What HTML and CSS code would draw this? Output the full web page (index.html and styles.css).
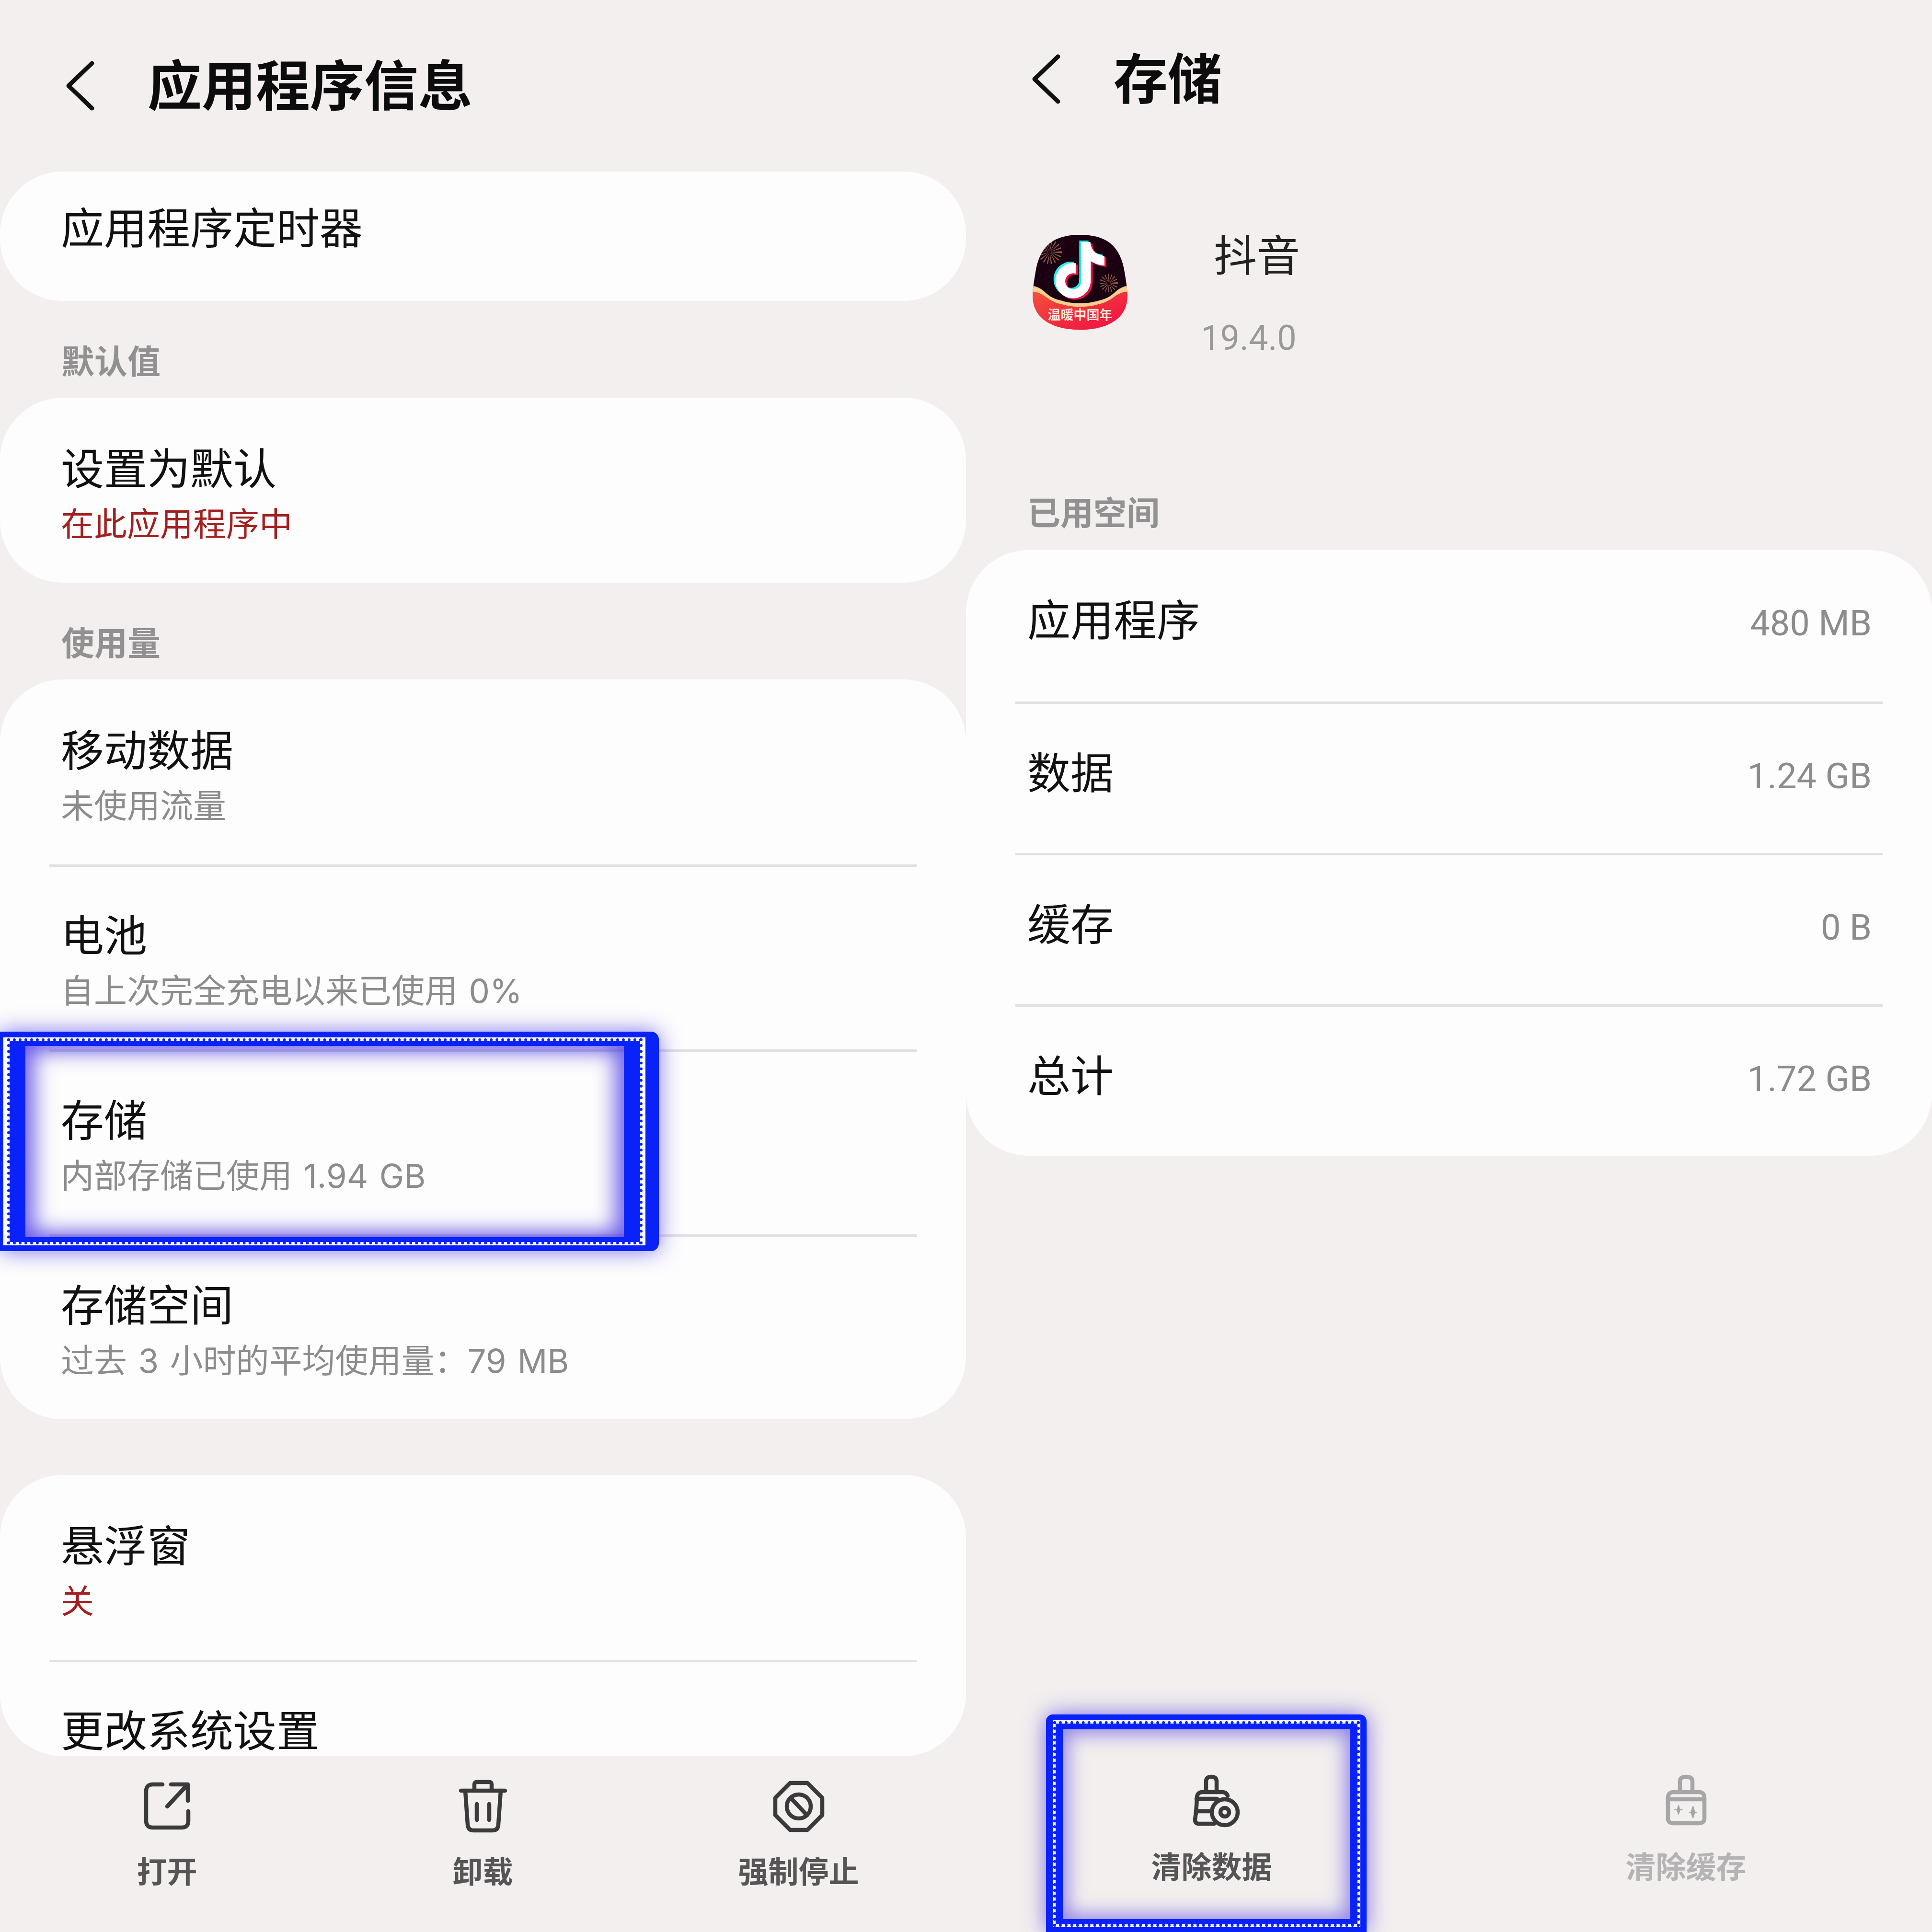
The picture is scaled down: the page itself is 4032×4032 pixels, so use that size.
FILE: index.html
```html
<!DOCTYPE html>
<html lang="zh-CN">
<head>
<meta charset="utf-8">
<title>应用程序信息</title>
<link rel="stylesheet" href="styles.css">
</head>
<body>
<svg class="defs" width="0" height="0" aria-hidden="true">
  <defs>
    <path id="note" d="M12.53.02C13.84 0 15.14.01 16.44 0c.08 1.53.63 3.09 1.75 4.17 1.12 1.11 2.7 1.62 4.24 1.79v4.03c-1.44-.05-2.89-.35-4.2-.97-.57-.26-1.1-.59-1.62-.93-.01 2.92.01 5.84-.02 8.75-.08 1.4-.54 2.79-1.35 3.94-1.31 1.92-3.58 3.17-5.91 3.21-1.43.08-2.86-.31-4.08-1.03-2.02-1.19-3.44-3.37-3.65-5.71-.02-.5-.03-1-.01-1.49.18-1.9 1.12-3.72 2.58-4.96 1.66-1.44 3.98-2.13 6.15-1.72.02 1.48-.04 2.96-.04 4.44-.99-.32-2.15-.23-3.02.37-.63.41-1.11 1.04-1.36 1.75-.21.51-.15 1.07-.14 1.61.24 1.64 1.82 3.02 3.5 2.87 1.12-.01 2.19-.66 2.77-1.61.19-.33.4-.67.41-1.06.1-1.79.06-3.57.07-5.36.01-4.03-.01-8.05.02-12.07z"/>
    <clipPath id="squircle">
      <path d="M100 2C160 2 185 30 193 80C198 110 200 125 198 140C194 175 160 200 100 200C40 200 6 175 2 140C0 125 2 110 7 80C15 30 40 2 100 2Z"/>
    </clipPath>
    <linearGradient id="banner" x1="0" y1="0" x2="1" y2="1">
      <stop offset="0" stop-color="#f4503a"/>
      <stop offset="1" stop-color="#f00c44"/>
    </linearGradient>
  </defs>
</svg>
<main class="screen">
  <section class="panel">
    <header class="topbar">
      <svg class="back" viewBox="0 0 62 104"><path d="M56 5L7 52L56 99"/></svg>
      <h1 class="title">应用程序信息</h1>
    </header>

    <div class="card">
      <div class="row row-single"><div class="row-title">应用程序定时器</div></div>
    </div>

    <h2 class="section">默认值</h2>
    <div class="card">
      <div class="row">
        <div class="row-title">设置为默认</div>
        <div class="row-sub row-sub-red">在此应用程序中</div>
      </div>
    </div>

    <h2 class="section">使用量</h2>
    <div class="card">
      <div class="row">
        <div class="row-title">移动数据</div>
        <div class="row-sub">未使用流量</div>
      </div>
      <div class="row">
        <div class="row-title">电池</div>
        <div class="row-sub">自上次完全充电以来已使用 0%</div>
      </div>
      <div class="row">
        <div class="row-title">存储</div>
        <div class="row-sub">内部存储已使用 1.94 GB</div>
      </div>
      <div class="row">
        <div class="row-title">存储空间</div>
        <div class="row-sub">过去 3 小时的平均使用量：79 MB</div>
      </div>
    </div>

    <div class="card card-clipped">
      <div class="row">
        <div class="row-title">悬浮窗</div>
        <div class="row-sub row-sub-red">关</div>
      </div>
      <div class="row">
        <div class="row-title">更改系统设置</div>
      </div>
    </div>

    <nav class="actions actions-three">
      <div class="action">
        <svg class="action-icon" viewBox="0 0 120 120">
          <path d="M50 14H30Q16 14 16 28V90Q16 104 30 104H90Q104 104 104 90V70"/>
          <path d="M60 60L101 16M68 14H103V48"/>
        </svg>
        <span class="action-label">打开</span>
      </div>
      <div class="action">
        <svg class="action-icon" viewBox="0 0 120 120">
          <path d="M42 25V14Q42 9 47 9H73Q78 9 78 14V25"/>
          <path d="M14 27H106"/>
          <path d="M23 27L28 98Q29 110 40 110H80Q91 110 92 98L97 27"/>
          <path d="M47 55V88M73 55V88"/>
        </svg>
        <span class="action-label">卸载</span>
      </div>
      <div class="action">
        <svg class="action-icon" viewBox="0 0 120 120">
          <path d="M42 11H78L109 42V78L78 109H42L11 78V42Z"/>
          <circle cx="60" cy="60" r="25"/>
          <path d="M43 42L77 78"/>
        </svg>
        <span class="action-label">强制停止</span>
      </div>
    </nav>

    <div class="highlight highlight-storage">
      <div class="hl-band"><div class="hl-inner"></div></div>
    </div>
  </section>

  <section class="panel">
    <header class="topbar topbar-right">
      <svg class="back" viewBox="0 0 62 104"><path d="M56 5L7 52L56 99"/></svg>
      <h1 class="title">存储</h1>
    </header>

    <div class="app-info">
      <svg class="app-icon" viewBox="0 0 200 200">
        <g clip-path="url(#squircle)">
          <rect width="200" height="200" fill="#1b0012"/>
          <circle class="spark" cx="37" cy="38" r="14" stroke-width="22" stroke-dasharray="1.6 3.2"/>
          <circle class="spark" cx="160" cy="103" r="11" stroke-width="16" stroke-dasharray="1.4 2.8"/>
          <use href="#note" transform="translate(37 14) scale(4.9)" fill="#25e8ea"/>
          <use href="#note" transform="translate(45 20) scale(4.9)" fill="#f0104a"/>
          <use href="#note" transform="translate(41 17) scale(4.9)" fill="#ffffff"/>
          <path d="M0 108C30 114 25 131 60 139C85 147 115 147 140 139C175 131 170 114 200 108V200H0Z" fill="#f4cf8e"/>
          <path d="M0 120C30 124 30 140 62 147C85 154 115 154 138 147C170 140 170 124 200 120V200H0Z" fill="url(#banner)"/>
          <text class="app-banner" x="100" y="179" text-anchor="middle">温暖中国年</text>
        </g>
      </svg>
      <div class="app-text">
        <div class="app-name">抖音</div>
        <div class="app-version">19.4.0</div>
      </div>
    </div>

    <h2 class="section section-used">已用空间</h2>
    <div class="card card-usage">
      <div class="usage-row"><span class="usage-name">应用程序</span><span class="usage-value">480 MB</span></div>
      <div class="usage-row"><span class="usage-name">数据</span><span class="usage-value">1.24 GB</span></div>
      <div class="usage-row"><span class="usage-name">缓存</span><span class="usage-value">0 B</span></div>
      <div class="usage-row"><span class="usage-name">总计</span><span class="usage-value">1.72 GB</span></div>
    </div>

    <nav class="actions actions-two">
      <div class="action action-offset">
        <svg class="action-icon" viewBox="0 0 120 120">
          <path d="M50 80H18L16 98Q16 106 24 106H56"/>
          <path d="M18 85L20 52Q20 40 32 40H72Q82 40 84 48"/>
          <path d="M39 40V18Q39 8 50 8Q61 8 61 18V40"/>
          <path d="M19 54H62"/>
          <circle cx="78" cy="82" r="27"/>
          <circle cx="78" cy="82" r="9"/>
        </svg>
        <span class="action-label">清除数据</span>
      </div>
      <div class="action action-muted">
        <svg class="action-icon" viewBox="0 0 120 120">
          <path d="M47 40V18Q47 8 60 8Q73 8 73 18V40"/>
          <path d="M22 95V52Q22 40 34 40H86Q98 40 98 52V95Q98 105 86 105H34Q22 105 22 95Z"/>
          <path d="M22 55H98"/>
          <path class="sparkle" d="M44 68L47 77L44 86L41 77ZM74 70L78 82L74 94L70 82Z"/>
          <path class="sparkle" d="M36 77H52M66 82H82"/>
        </svg>
        <span class="action-label">清除缓存</span>
      </div>
    </nav>

    <div class="highlight highlight-clear">
      <div class="hl-band"><div class="hl-inner"></div></div>
    </div>
  </section>
</main>
</body>
</html>
```
FILE: styles.css
```css
* { box-sizing: border-box; }
html, body { margin: 0; padding: 0; }
body {
  width: 4032px;
  height: 4032px;
  overflow: hidden;
  background: #f3efee;
  font-family: Roboto, "Noto Sans CJK SC", sans-serif;
  color: #111;
}
.defs { position: absolute; }
.screen {
  display: grid;
  grid-template-columns: 2016px 2016px;
  height: 4032px;
}
.panel {
  position: relative;
  display: flex;
  flex-direction: column;
  height: 4032px;
  overflow: hidden;
}

/* top bars */
.topbar {
  display: flex;
  align-items: center;
  gap: 110px;
  height: 358px;
  padding: 6px 0 0 136px;
}
.topbar-right {
  height: 336px;
  padding: 0 0 0 136px;
}
.back {
  width: 62px;
  height: 104px;
  flex: none;
  margin-top: -6px;
  fill: none;
  stroke: #111;
  stroke-width: 9;
  stroke-linecap: round;
  stroke-linejoin: round;
}
.title {
  margin: 0;
  font-size: 113px;
  line-height: 140px;
  font-weight: 700;
  color: #0c0c0c;
}

/* cards and rows */
.card {
  flex: none;
  background: #fdfdfd;
  border-radius: 130px;
  overflow: hidden;
}
.card + .card { margin-top: 116px; }
.card-clipped { height: 587px; overflow: visible; }
.card-clipped .row + .row { height: 201px; }
.row {
  height: 386px;
  margin: 0 103px;
  padding: 104px 0 0 24px;
}
.row + .row {
  padding-top: 99px;
  border-top: 5px solid #e2e0e0;
}
.row-single {
  height: 270px;
  padding-top: 74px;
}
.row-title {
  font-size: 90px;
  line-height: 94px;
  color: #111;
}
.row-sub {
  margin-top: 24px;
  font-family: Inter, "Noto Sans CJK SC", sans-serif;
  font-size: 69px;
  line-height: 84px;
  word-spacing: 4px;
  color: #8c8c8c;
}
.row-sub-red { color: #a32020; }

.section {
  margin: 0;
  padding: 87px 0 31px 128px;
  font-size: 69px;
  line-height: 84px;
  font-weight: 700;
  color: #919191;
}

/* bottom actions */
.actions {
  flex: none;
  display: grid;
  margin-top: auto;
}
.actions-three {
  height: 367px;
  grid-template-columns: repeat(3, 659px);
  padding: 45px 0 0 19px;
}
.actions-two {
  height: 332px;
  grid-template-columns: repeat(2, 981px);
  padding: 0 0 0 31px;
}
.action {
  display: flex;
  flex-direction: column;
  align-items: center;
  color: #555;
}
.action-icon {
  width: 120px;
  height: 120px;
  fill: none;
  stroke: #3a3a3a;
  stroke-width: 8.5;
  stroke-linecap: round;
  stroke-linejoin: round;
}
.action-label {
  margin-top: 36px;
  font-size: 63px;
  line-height: 84px;
  font-weight: 700;
}
.action-offset .action-label { margin-right: 18px; }
.action-muted { color: #b4b4b4; }
.action-muted .action-icon { stroke: #a6a6a6; }
.sparkle { fill: #a6a6a6; stroke-width: 2; }

/* app header */
.app-info {
  display: flex;
  height: 692px;
  padding-left: 138px;
}
.app-icon { width: 200px; height: 200px; margin-top: 152px; flex: none; }
.spark { fill: none; stroke: #8a5a48; }
.app-banner {
  font-family: "Noto Sans CJK SC", sans-serif;
  font-size: 27px;
  font-weight: 700;
  fill: #ffe6d6;
}
.app-text { padding-left: 152px; margin-top: 150px; }
.app-name {
  padding-left: 27px;
  font-size: 90px;
  line-height: 100px;
  color: #222;
}
.app-version {
  margin-top: 75px;
  font-size: 72px;
  line-height: 90px;
  color: #999;
}
.section-used { padding: 3px 0 33px 128px; }

/* usage list */
.usage-row {
  display: flex;
  justify-content: space-between;
  align-items: center;
  height: 316px;
  margin: 0 103px;
  padding: 0 23px 18px 25px;
}
.usage-row + .usage-row { border-top: 5px solid #e2e0e0; }
.usage-name { font-size: 90px; line-height: 100px; color: #111; }
.usage-value { margin-top: 8px; font-size: 74px; line-height: 100px; color: #8c8c8c; }

/* blue annotation boxes */
.highlight {
  position: absolute;
  display: flex;
  border-style: solid;
  border-color: #0a22fa;
  box-shadow: 0 0 46px rgba(50, 30, 225, .62);
}
.highlight-storage {
  left: 0;
  top: 2153px;
  width: 1375px;
  height: 458px;
  border-width: 12px 28px 12px 7px;
  border-radius: 0 16px 16px 0;
}
.highlight-clear {
  left: 167px;
  top: 3578px;
  width: 669px;
  height: 454px;
  border-width: 12px 13px 10px 14px;
  border-radius: 14px 14px 0 0;
}
.hl-band {
  flex: 1;
  display: flex;
  border-style: solid;
  border-color: #fff;
}
.highlight-storage .hl-band { border-width: 7px 11px 7px 13px; }
.highlight-clear .hl-band { border-width: 7px 6px 6px 6px; }
.hl-inner {
  flex: 1;
  border-style: solid;
  border-color: #0a22fa;
  outline: 6px dotted #0a22fa;
  outline-offset: -1px;
}
.highlight-storage .hl-inner {
  border-width: 11px 34px 10px 33px;
  box-shadow:
    inset 0 0 44px 12px rgba(50, 30, 225, .5),
    inset 26px 0 44px -6px rgba(50, 30, 225, .35),
    inset -26px 0 44px -6px rgba(50, 30, 225, .35);
}
.highlight-clear .hl-inner {
  border-width: 12px 15px 11px 15px;
  box-shadow: inset 0 0 38px 10px rgba(50, 30, 225, .5);
}
```
